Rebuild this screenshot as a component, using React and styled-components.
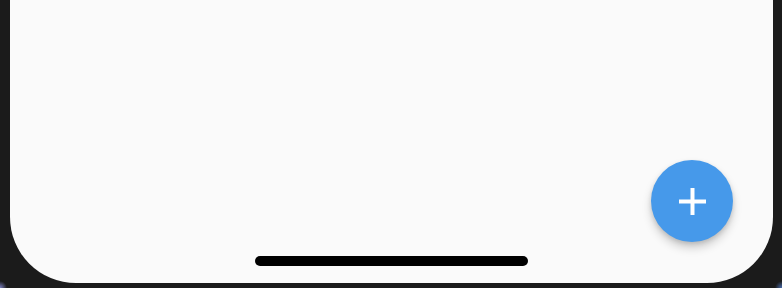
import React from 'react'
import styled, { createGlobalStyle } from 'styled-components'

const GlobalStyle = createGlobalStyle`
  html, body {
    margin: 0;
    padding: 0;
    width: 782px;
    height: 288px;
    overflow: hidden;
    font-family: Roboto, "Liberation Sans", sans-serif;
  }
  body {
    background:
      radial-gradient(circle at 0 288px, #7d82c4 0, rgba(125,130,196,0) 7px),
      radial-gradient(circle at 782px 288px, #4b6fb0 0, rgba(75,111,176,0) 7px),
      #1b1b1b;
  }
`

const Device = styled.div`
  width: 782px;
  height: 288px;
  padding: 0 9px 0 10px;
  box-sizing: border-box;
  display: flex;
  flex-direction: column;
`

const Screen = styled.div`
  position: relative;
  height: 283px;
  background: #fafafa;
  border-bottom-left-radius: 66px;
  border-bottom-right-radius: 66px;
  overflow: hidden;
`

const Fab = styled.button`
  position: absolute;
  left: 641px;
  top: 160px;
  width: 82px;
  height: 82px;
  border: none;
  border-radius: 50%;
  padding: 0;
  background: #4699ea;
  box-shadow: 0 6px 10px rgba(0, 0, 0, 0.18), 0 2px 4px rgba(0, 0, 0, 0.12);
  display: flex;
  align-items: center;
  justify-content: center;
  cursor: pointer;
`

const HomeIndicator = styled.div`
  position: absolute;
  left: 245px;
  top: 256px;
  width: 273px;
  height: 10px;
  border-radius: 5px;
  background: #000;
`

function PlusIcon () {
  return (
    <svg width="29" height="29" viewBox="0 0 29 29">
      <path d="M14.5 1 V28 M1 14.5 H28" stroke="#fff" strokeWidth="4" fill="none" />
    </svg>
  )
}

export default function App () {
  return (
    <>
      <GlobalStyle />
      <Device>
        <Screen>
          <Fab aria-label="Add">
            <PlusIcon />
          </Fab>
          <HomeIndicator />
        </Screen>
      </Device>
    </>
  )
}
